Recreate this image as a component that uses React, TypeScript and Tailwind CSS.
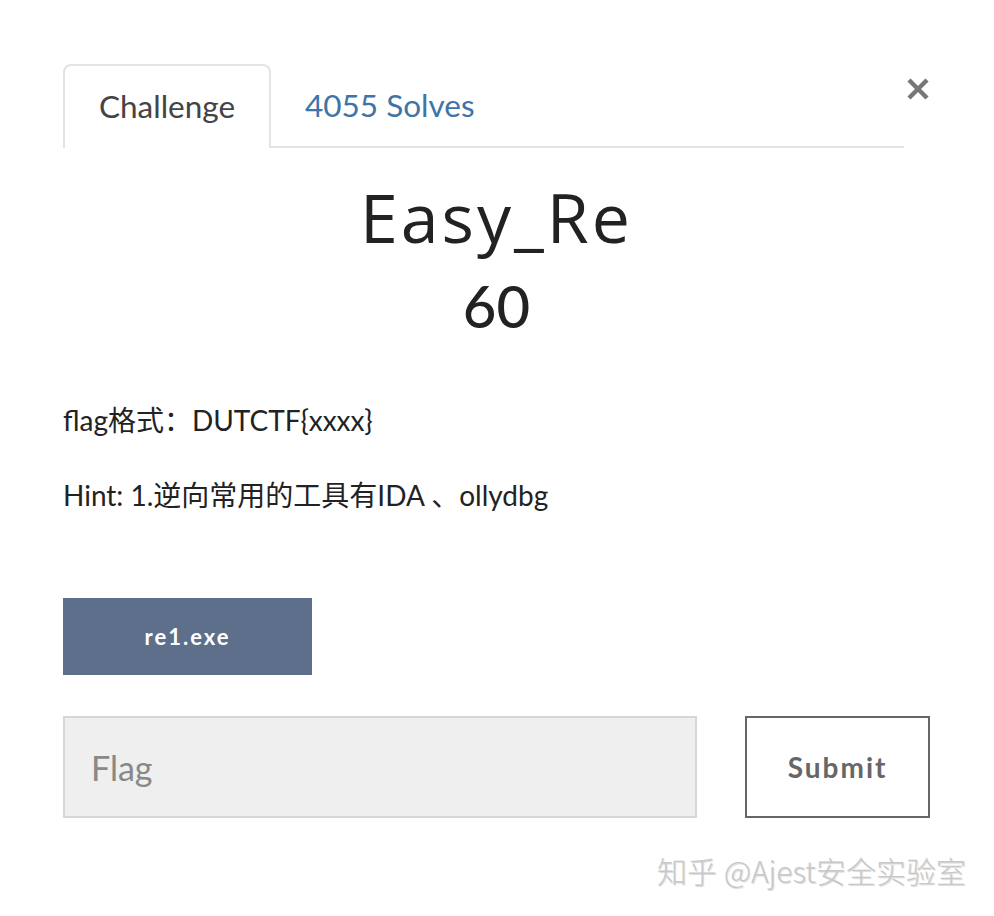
import React from "react";

const App = () => {
  return (
    <div className="w-[994px] h-[916px] bg-white relative overflow-hidden font-['Lato','Noto_Sans_CJK_SC',sans-serif] text-[#222]">
      <div className="pl-[63px] pr-[64px] pt-[64px]">
        {/* Tabs + close */}
        <div className="flex items-start">
          <div className="flex-1 flex border-b-2 border-[#e3e3e3] h-[84px]">
            <div className="w-[208px] h-[84px] border-2 border-b-0 border-[#e3e3e3] rounded-t-[8px] bg-white flex items-center justify-center text-[31.5px] text-[#444] -mb-[2px]">
              Challenge
            </div>
            <div className="ml-[34px] h-[84px] flex items-center text-[31.5px] text-[#3e74a8]">
              4055 Solves
            </div>
          </div>
          <button className="ml-[2px] mt-[10px] w-[24px] h-[30px] flex items-center justify-center text-[#777]">
            <svg width="24" height="24" viewBox="0 0 24 24">
              <path d="M3 3 L21 21 M21 3 L3 21" stroke="#777" strokeWidth="4.5" strokeLinecap="butt" />
            </svg>
          </button>
        </div>

        {/* Title */}
        <div className="text-center mt-[29px]">
          <h1 className="text-[68px] leading-[80px] tracking-[3px] text-[#222] font-['Open_Sans',sans-serif] font-normal">
            Easy_Re
          </h1>
          <div className="text-[58px] leading-[70px] text-[#222] font-medium mt-[14px]">60</div>
        </div>

        {/* Description */}
        <div className="mt-[62px] text-[28px] leading-[34px] text-[#222]">
          <p>flag格式：DUTCTF&#123;xxxx&#125;</p>
          <p className="mt-[41px]">Hint: 1.逆向常用的工具有IDA 、ollydbg</p>
        </div>

        {/* File button */}
        <div className="mt-[86px]">
          <button className="w-[249px] h-[77px] bg-[#5d6f8b] text-white text-[22px] font-bold tracking-[2px]">
            re1.exe
          </button>
        </div>

        {/* Flag input */}
        <div className="mt-[41px] flex items-start">
          <div className="w-[635px] h-[102px] bg-[#efefef] border-2 border-[#d6d6d6] flex items-center px-[26px] text-[34px] text-[#888]">
            Flag
          </div>
          <button className="ml-[48px] w-[185px] h-[102px] border-2 border-[#666] bg-white text-[28px] font-bold text-[#666] tracking-[2px]">
            Submit
          </button>
        </div>
      </div>

      {/* Watermark */}
      <div className="absolute left-[657px] top-[848px] text-[30px] text-[#c8c8c8] font-['Noto_Sans_CJK_SC',sans-serif] font-light whitespace-nowrap [text-shadow:1px_1px_1px_rgba(0,0,0,0.15)]">
        知乎 @Ajest安全实验室
      </div>
    </div>
  );
};

export default App;
